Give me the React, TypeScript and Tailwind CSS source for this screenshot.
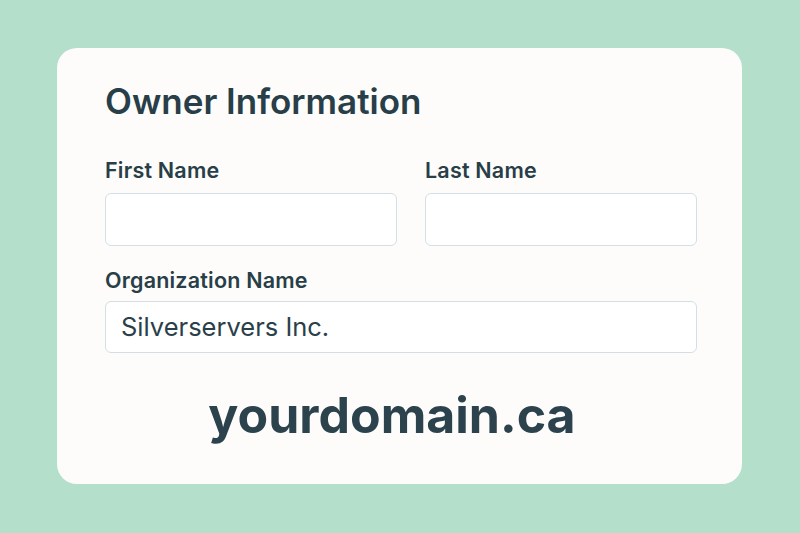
export default function App() {
  return (
    <div
      className="w-[800px] h-[533px] bg-[#b3dfcb] pt-[48px] pl-[57px]"
      style={{ fontFamily: 'Inter, "Noto Sans", sans-serif' }}
    >
      <div className="w-[685px] h-[436px] bg-[#fdfcfa] rounded-[20px] pl-[48px] pr-[45px] pt-[36px] text-[#283e48]">
        <h1 className="text-[35px] leading-none font-semibold tracking-[0px]">Owner Information</h1>

        <div className="flex gap-[28px] mt-[41px]">
          <div className="w-[292px]">
            <label className="block text-[21.5px] leading-none font-semibold tracking-[0.2px]">First Name</label>
            <div className="mt-[11px] h-[53px] rounded-[6px] border border-[#d3dfe4] bg-white" />
          </div>
          <div className="flex-1">
            <label className="block text-[21.5px] leading-none font-semibold tracking-[0.2px]">Last Name</label>
            <div className="mt-[11px] h-[53px] rounded-[6px] border border-[#d3dfe4] bg-white" />
          </div>
        </div>

        <label className="block mt-[24px] text-[21.5px] leading-none font-semibold tracking-[0.2px]">
          Organization Name
        </label>
        <div className="mt-[10px] h-[52px] rounded-[6px] border border-[#d3dfe4] bg-white flex items-center pl-[15px]">
          <span className="text-[25.5px] leading-none text-[#2a3f49]">Silverservers Inc.</span>
        </div>

        <div className="mt-[37px] text-center text-[50px] leading-none font-bold text-[#2c434d] pr-[18px]">
          yourdomain.ca
        </div>
      </div>
    </div>
  );
}
